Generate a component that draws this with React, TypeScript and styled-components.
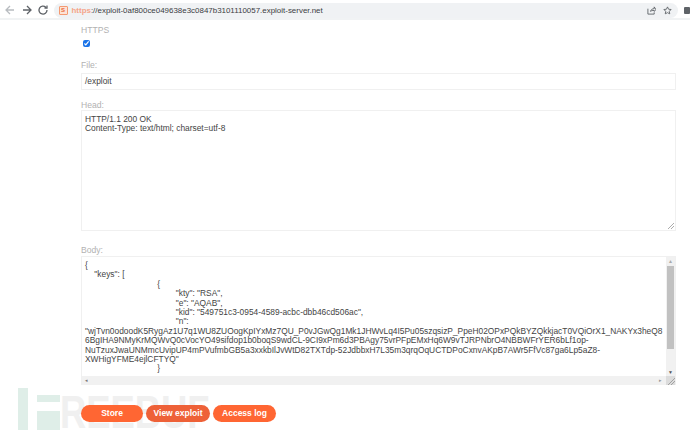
import React from "react";
import styled, { createGlobalStyle } from "styled-components";

const Global = createGlobalStyle`
  html, body { margin: 0; padding: 0; background: #fff; }
  body { width: 690px; height: 437px; overflow: hidden; font-family: "Liberation Sans", Arial, sans-serif; }
`;
const Page = styled.div`position: relative; width: 690px; height: 437px; overflow: hidden;`;
const Toolbar = styled.div`
  height: 16px; display: flex; align-items: center; background: #fff; border-bottom: 2px solid #f1f3f4; padding: 2px 0 0 4px;
`;
const NavButton = styled.svg`width: 12px; height: 12px; margin-right: 4.5px; flex: none; fill: none; stroke: ${p => p.color}; stroke-width: 1.3;`;
const Omnibox = styled.div`
  width: 624px; height: 15px; border-radius: 8px; background: #f0f2f4; display: flex; align-items: center; padding-left: 5px; box-sizing: border-box; font-size: 7.95px; color: #3c4043; flex: none;
`;
const SiteIcon = styled.span`
  width: 7px; height: 7px; border: 1px solid #f49a72; background: #fde3d6; border-radius: 1px; margin-right: 4px; flex: none;
  font-size: 6px; line-height: 7px; text-align: center; color: #e9683a; font-weight: bold;
`;
const Scheme = styled.span`color: #f5a58a; font-weight: bold;`;
const Url = styled.span`flex: 1; white-space: nowrap;`;
const OmniIcon = styled.svg`width: 9px; height: 9px; margin-right: ${p => p.$gap}px; flex: none; fill: none; stroke: #5f6368; stroke-width: 1;`;
const Puzzle = styled.div`width: 6px; height: 7px; margin-left: 6px; background: #5f6368; border-radius: 1px; flex: none;`;
const Form = styled.div`
  position: relative; padding: 5px 0 0 81px; width: 595px; box-sizing: content-box;
`;
const Label = styled.div`font-size: 8.6px; line-height: 11px; color: #b2b2b2; margin-bottom: ${p => p.$gap}px;`;
const Check = styled.input`display: block; width: 7px; height: 7px; margin: 0 0 13px 2px; accent-color: #1a73e8;`;
const TextField = styled.div`
  height: 15px; border: 1px solid #f0f0f0; line-height: 15px; padding-left: 3px; margin-bottom: 10px; color: #444; font-size: 8.4px;
`;
const HeadArea = styled.div`
  position: relative; height: 113px; border: 1px solid #f0f0f0; padding: 4px 3px 2px; line-height: 9.4px; margin-bottom: 14px; color: #444; font-size: 8.4px;
`;
const Resize = styled.svg`position: absolute; right: 1px; bottom: 1px; width: 6px; height: 6px; stroke: #888; stroke-width: .7;`;
const BodyArea = styled.div`
  position: relative; height: 128px; border: 1px solid #f0f0f0; border-bottom-width: 0; margin-bottom: 20px; overflow: hidden;
`;
const BodyText = styled.pre`
  margin: 0; padding: 4px 0 0 3px; font: 8.4px/9.4px "Liberation Sans", Arial, sans-serif; color: #444; white-space: pre;
`;
const VBar = styled.div`
  position: absolute; right: 0; top: 0; width: 9px; bottom: 9px; background: #f1f1f1; font-size: 5px; color: #555; text-align: center;
`;
const Thumb = styled.div`position: absolute; left: 1px; top: 9px; width: 7px; height: 83px; background: #c1c1c1;`;
const ArrowUp = styled.span`position: absolute; left: 0; right: 0; top: 1px; line-height: 6px; color: #aaa;`;
const ArrowDown = styled.span`position: absolute; left: 0; right: 0; bottom: 1px; line-height: 6px;`;
const HBar = styled.div`
  position: absolute; left: 0; right: 0; bottom: 0; height: 9px; background: #f1f1f1; color: #777; font-size: 5px; line-height: 9px; padding-left: 3px;
`;
const ArrowRight = styled.span`position: absolute; right: 13px; color: #999;`;
const Corner = styled.svg`position: absolute; right: 0; bottom: 0; width: 9px; height: 9px; background: #dcdcdc; stroke: #888; stroke-width: .7;`;
const Buttons = styled.div`display: flex; gap: 3px; position: relative;`;
const Pill = styled.div`
  width: ${p => p.$w}px; height: 17px; border-radius: 9px; background: ${p => p.$bg}; color: #fff; font-weight: bold; font-size: 8.5px; line-height: 17px; text-align: center;
`;
const Watermark = styled.div`position: absolute; left: 18px; top: 388px; width: 190px; height: 42px;`;
const MarkBar = styled.div`position: absolute; background: #dfeee8; left: ${p => p.$x}px; top: ${p => p.$y}px; width: ${p => p.$w}px; height: ${p => p.$h}px;`;
const MarkText = styled.span`position: absolute; left: 42px; top: 5px; font: bold 46px/38px "Liberation Sans", Arial, sans-serif; color: #f0f0f0; white-space: nowrap; transform: scaleX(.79); transform-origin: left center;`;

const pad = (n: number) => " ".repeat(n);
const body = `{
${pad(4)}"keys": [
${pad(31)}{
${pad(39)}"kty": "RSA",
${pad(39)}"e": "AQAB",
${pad(39)}"kid": "549751c3-0954-4589-acbc-dbb46cd506ac",
${pad(39)}"n":
"wjTvn0odoodK5RygAz1U7q1WU8ZUOogKpIYxMz7QU_P0vJGwQg1Mk1JHWvLq4I5Pu05szqsizP_PpeH02OPxPQkBYZQkkjacT0VQiOrX1_NAKYx3heQ8
6BgIHA9NMyKrMQWvQ0cVocYO49sifdop1b0boqS9wdCL-9CI9xPm6d3PBAgy75vrPFpEMxHq6W9vTJRPNbrO4NBBWFrYER6bLf1op-
NuTzuxJwaUNMmcUvipUP4mPVufmbGB5a3xxkbIlJvWtD82TXTdp-52JdbbxH7L35m3qrqOqUCTDPoCxnvAKpB7AWr5FfVc87ga6Lp5aZ8-
XWHigYFME4ejlCFTYQ"
${pad(31)}}`;

export default function App() {
  return (
    <Page>
      <Global />
      <Toolbar>
        <NavButton color="#b8bcc0" viewBox="0 0 12 12"><path d="M10 6H2M6 2 2 6l4 4" /></NavButton>
        <NavButton color="#5f6368" viewBox="0 0 12 12"><path d="M2 6h8M6 2l4 4-4 4" /></NavButton>
        <NavButton color="#5f6368" viewBox="0 0 12 12"><path d="M10 6a4 4 0 1 1-1.2-2.8M10 1.500v2.500H7.500" /></NavButton>
        <Omnibox>
          <SiteIcon>S</SiteIcon>
          <Url><Scheme>https</Scheme>://exploit-0af800ce049638e3c0847b3101110057.exploit-server.net</Url>
          <OmniIcon $gap={7} viewBox="0 0 10 10"><path d="M1 3v6h7V7M4 6c0-2 2-3 4-3V1l2 3-2 2V5C6 5 5 5 4 6z" /></OmniIcon>
          <OmniIcon $gap={5.5} viewBox="0 0 10 10"><path d="M5 1l1.200 2.600 2.800.3-2 2 .5 2.800L5 7.400 2.500 8.700 3 5.900l-2-2 2.800-.3z" /></OmniIcon>
        </Omnibox>
        <Puzzle />
      </Toolbar>
      <Watermark>
        <MarkBar $x={0} $y={0} $w={10} $h={42} />
        <MarkBar $x={19} $y={7} $w={23} $h={7} />
        <MarkBar $x={19} $y={23} $w={23} $h={19} />
        <MarkText>REEBUF</MarkText>
      </Watermark>
      <Form>
        <Label $gap={4}>HTTPS</Label>
        <Check type="checkbox" defaultChecked />
        <Label $gap={2}>File:</Label>
        <TextField>/exploit</TextField>
        <Label $gap={-1}>Head:</Label>
        <HeadArea>
          HTTP/1.1 200 OK<br />Content-Type: text/html; charset=utf-8
          <Resize viewBox="0 0 6 6"><path d="M0 6 6 0M3 6l3-3" /></Resize>
        </HeadArea>
        <Label $gap={0}>Body:</Label>
        <BodyArea>
          <BodyText>{body}</BodyText>
          <VBar><ArrowUp>▲</ArrowUp><Thumb /><ArrowDown>▼</ArrowDown></VBar>
          <HBar>◂<ArrowRight>▸</ArrowRight></HBar>
          <Corner viewBox="0 0 9 9"><path d="M2 9 9 2M5 9l4-4" /></Corner>
        </BodyArea>
        <Buttons>
          <Pill $w={62} $bg="#ff6633">Store</Pill>
          <Pill $w={64} $bg="#ee6138">View exploit</Pill>
          <Pill $w={63} $bg="#ff6633">Access log</Pill>
        </Buttons>
      </Form>
    </Page>
  );
}
